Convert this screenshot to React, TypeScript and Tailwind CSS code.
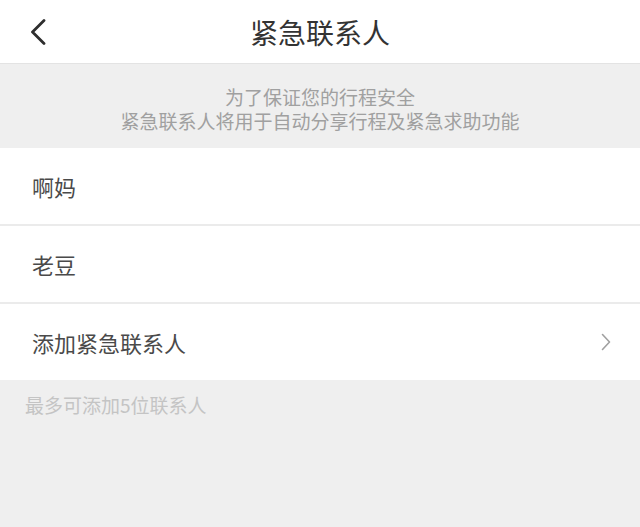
import React from "react";

const font = { fontFamily: '"Noto Sans CJK SC", "Noto Sans", sans-serif' };

function Row({ label, arrow }: { label: string; arrow?: boolean }) {
  return (
    <div className="flex h-[76px] items-center justify-between bg-white pl-[32px] pr-[29px]">
      <span className="text-[22px] leading-none text-[#4a4a4a]">{label}</span>
      {arrow && (
        <svg width="10" height="18" viewBox="0 0 10 18" fill="none">
          <polyline points="1.5,1.5 8.5,9 1.5,16.5" stroke="#a0a0a0" strokeWidth="1.6" strokeLinecap="round" strokeLinejoin="round" />
        </svg>
      )}
    </div>
  );
}

export default function App() {
  return (
    <div className="flex h-[527px] w-[640px] flex-col bg-[#efefef]" style={font}>
      <div className="grid h-[63px] grid-cols-[1fr_auto_1fr] items-center bg-white">
        <div className="pl-[30px]">
          <svg width="16" height="26" viewBox="0 0 16 26" fill="none" className="block">
            <polyline points="14,1.5 2.5,13 14,24.5" stroke="#2e2e2e" strokeWidth="2.8" strokeLinecap="round" strokeLinejoin="round" />
          </svg>
        </div>
        <h1 className="text-[28px] leading-none font-normal text-[#333333]">紧急联系人</h1>
        <div />
      </div>
      <div className="h-px bg-[#e3e3e3]" />
      <div className="flex h-[84px] flex-col items-center justify-center pt-[6px] text-[19px] leading-[24px] text-[#a0a0a0]">
        <p>为了保证您的行程安全</p>
        <p>紧急联系人将用于自动分享行程及紧急求助功能</p>
      </div>
      <Row label="啊妈" />
      <div className="h-[2px] bg-[#ebebeb]" />
      <Row label="老豆" />
      <div className="h-[2px] bg-[#ebebeb]" />
      <Row label="添加紧急联系人" arrow />
      <div className="pl-[25px] pt-[15px] text-[19px] leading-[20px] text-[#c4c4c4]">最多可添加5位联系人</div>
    </div>
  );
}
